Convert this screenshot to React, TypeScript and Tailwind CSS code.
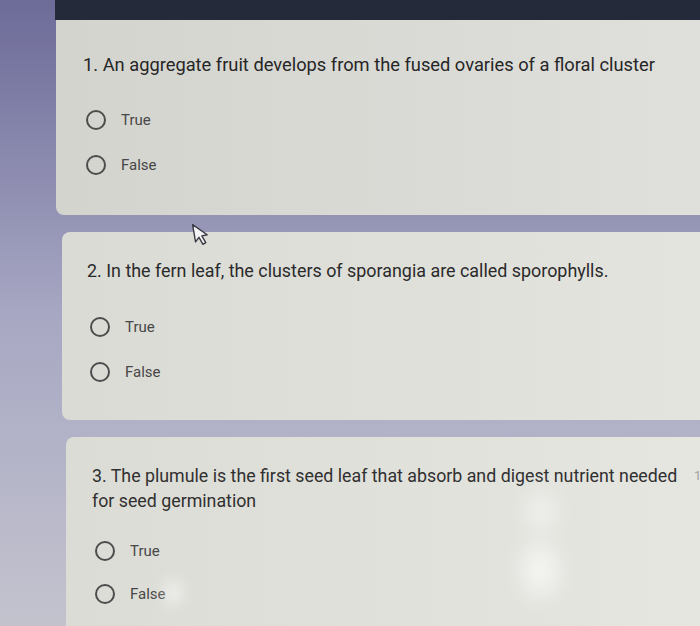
import React from 'react';

type Option = { label: string };

function Radio({ label }: Option) {
	return (
		<div className="flex h-[24px] items-center">
			<span className="ml-[3px] h-[20px] w-[20px] shrink-0 rounded-full border-[2.5px] border-[#4d4d4d]" />
			<span className="ml-[15px] text-[15px] text-[#474747]">{label}</span>
		</div>
	);
}

function Cursor() {
	return (
		<svg
			className="absolute left-[192px] top-[222px]"
			width="18"
			height="26"
			viewBox="0 0 18 26"
			aria-hidden
		>
			<path
				d="M2 1.5 L2.5 19 L6.5 15 L9.5 22.5 L12.5 21.2 L9.6 14 L15 13.6 Z"
				fill="#f4f4f6"
				stroke="#3a3a44"
				strokeWidth="1.4"
				strokeLinejoin="round"
				transform="rotate(-8 9 12)"
			/>
		</svg>
	);
}

export default function App() {
	return (
		<div
			className="relative h-[626px] w-[700px] overflow-hidden bg-gradient-to-b from-[#6d6b98] via-[#a7a7c3] to-[#c3c3ce]"
			style={{ fontFamily: 'Roboto, "Noto Sans", sans-serif' }}
		>
			<div className="ml-[55px] h-[20px] bg-[#252a3a]" />

			{/* question 1 */}
			<section className="ml-[56px] h-[195px] rounded-bl-lg bg-gradient-to-r from-[#d4d4cf] to-[#dfdfdb] pl-[27px] pt-[33px]">
				<p className="whitespace-nowrap text-[18.3px] leading-[24px] text-[#262626]">
					1. An aggregate fruit develops from the fused ovaries of a floral cluster
				</p>
				<div className="mt-[31px] flex flex-col gap-[21px]">
					<Radio label="True" />
					<Radio label="False" />
				</div>
			</section>

			{/* question 2 */}
			<section className="ml-[62px] mt-[17px] h-[188px] rounded-l-lg bg-gradient-to-r from-[#dbdbd5] to-[#e4e4df] pl-[25px] pt-[27px]">
				<p className="whitespace-nowrap text-[17.9px] leading-[24px] text-[#2a2a2a]">
					2. In the fern leaf, the clusters of sporangia are called sporophylls.
				</p>
				<div className="mt-[32px] flex flex-col gap-[21px]">
					<Radio label="True" />
					<Radio label="False" />
				</div>
			</section>

			{/* question 3 */}
			<section className="ml-[66px] mt-[17px] h-[200px] rounded-tl-lg bg-gradient-to-r from-[#dcdcd6] to-[#e6e6e1] pl-[26px] pt-[26px]">
				<div className="flex items-start gap-[10px]">
					<p className="w-[592px] shrink-0 whitespace-nowrap text-[17.8px] leading-[25px] text-[#303030]">
						3. The plumule is the first seed leaf that absorb and digest nutrient needed
						<br />
						for seed germination
					</p>
					<span className="text-[13px] leading-[25px] text-[#a0a0a0]">1</span>
				</div>
				<div className="mt-[26px] flex flex-col gap-[19px]">
					<Radio label="True" />
					<Radio label="False" />
				</div>
			</section>

			{/* glare from the photo */}
			<div className="pointer-events-none absolute left-[528px] top-[492px] h-[40px] w-[26px] rounded-full bg-white/50 blur-md" />
			<div className="pointer-events-none absolute left-[525px] top-[545px] h-[50px] w-[30px] rounded-full bg-white/70 blur-md" />
			<div className="pointer-events-none absolute left-[165px] top-[580px] h-[25px] w-[16px] rounded-full bg-white/60 blur-sm" />

			<Cursor />
		</div>
	);
}
